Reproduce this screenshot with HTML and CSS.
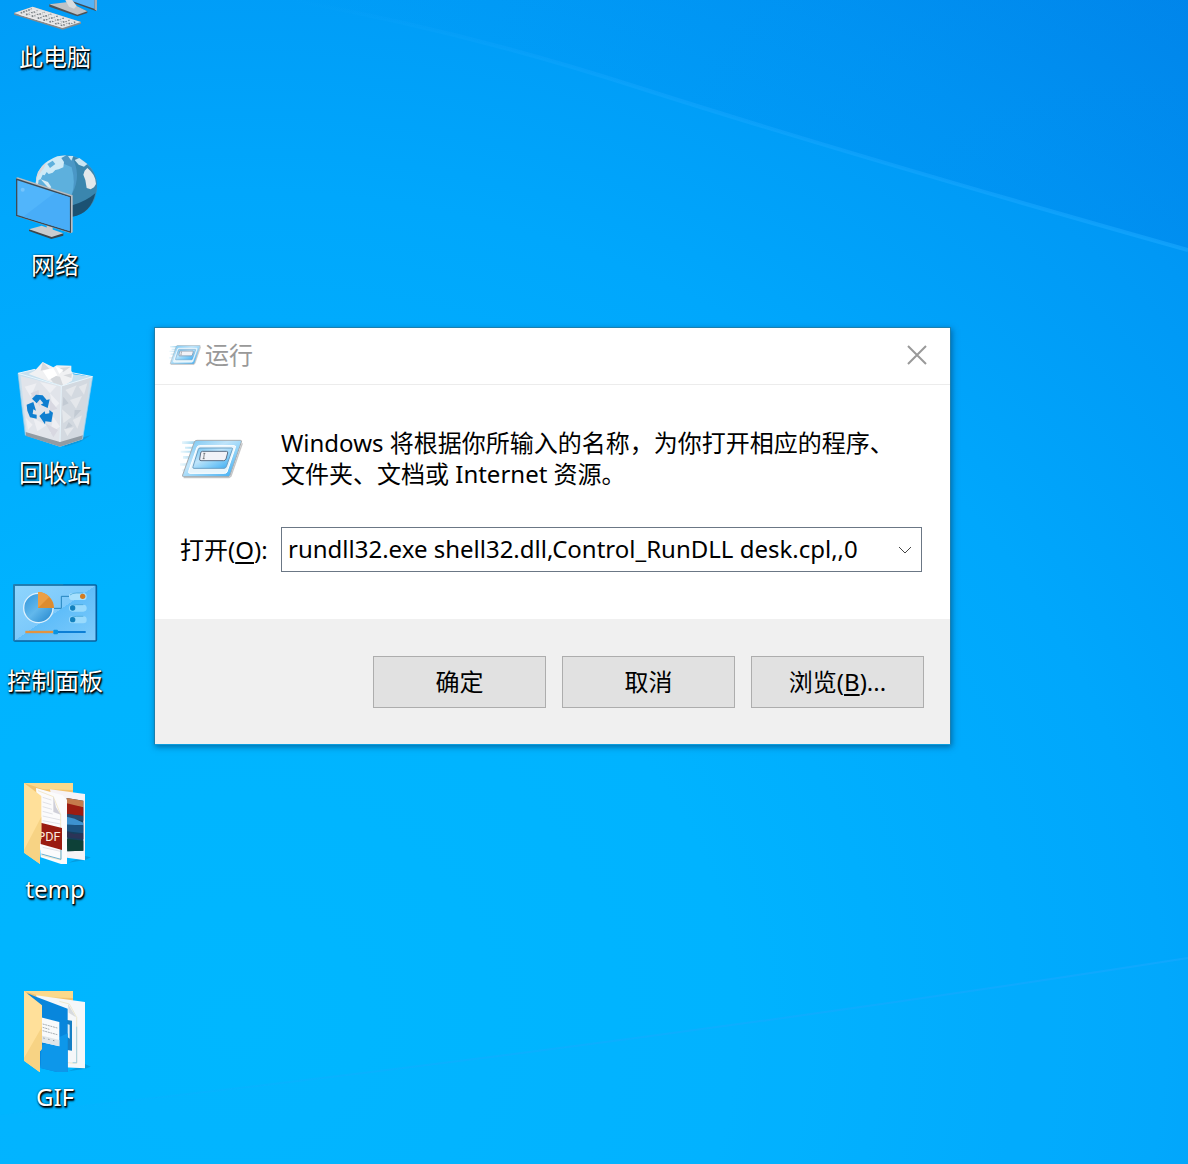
FILE: index.html
```
<!DOCTYPE html>
<html lang="zh-CN">

<head>
    <meta charset="utf-8" />
    <title>运行</title>
    <link rel="stylesheet" href="styles.css">
</head>

<body>

<!-- 壁纸 -->
<svg class="wallpaper" viewBox="0 0 1188 1164" preserveAspectRatio="none" aria-hidden="true">
    <defs>
        <linearGradient id="ray" x1="0" y1="0" x2="1" y2="0">
            <stop offset="0" stop-color="#1aa8ff" stop-opacity="0"/>
            <stop offset="0.4" stop-color="#1aa8ff" stop-opacity="0.4"/>
            <stop offset="1" stop-color="#1aa8ff" stop-opacity="0.6"/>
        </linearGradient>
        <linearGradient id="shade" x1="0" y1="0" x2="1" y2="0">
            <stop offset="0" stop-color="#0070e0" stop-opacity="0"/>
            <stop offset="1" stop-color="#0070e0" stop-opacity="0.2"/>
        </linearGradient>
    </defs>
    <path d="M290 0Q460 30 640 88Q850 155 1188 250V0Z" fill="url(#shade)"/>
    <path d="M290 0Q460 30 640 88Q850 155 1188 250" fill="none" stroke="url(#ray)" stroke-width="4"/>
    <path d="M0 1115Q600 1050 1188 958V1164H0Z" fill="#0cb4ff" fill-opacity="0.14"/>
    <path d="M0 1115Q600 1050 1188 958" fill="none" stroke="url(#ray)" stroke-width="2"/>
</svg>

<!-- 桌面图标 -->
<ul class="icons">
    <li>
        <a href="#">
            <svg viewBox="0 -192 330 288">
                <path d="M50 -150L286 -100V30L190 -4L50 -50Z" fill="#53b4fa" stroke="#444b52" stroke-width="4"/>
                <path d="M284 -100L291 -97V32L284 29Z" fill="#a9adb1"/>
                <path d="M148 13L205 8L262 34V39L232 49L148 20Z" fill="#4d5357"/>
                <path d="M148 13L205 6L262 34L232 44Z" fill="#bfc3c6"/>
                <path d="M190 -10L215 -2L230 18L222 26L207 20Z" fill="#d9dcde"/>
                <path d="M42 39L98 20L243 66V71L188 89L42 44Z" fill="#85898c"/>
                <path d="M42 39L98 20L243 66L188 84Z" fill="#e3e4e5"/>
                <path d="M62 39L96 27M78 44L116 32M95 49L135 38M113 55L154 43M130 61L173 49M148 66L192 55M165 72L211 61M182 77L228 66" stroke="#7c8286" stroke-width="5" stroke-dasharray="5 3"/>
                <path d="M58 43L186 81M76 36L206 75M93 29L222 69" stroke="#eeeeee" stroke-width="3"/>
            </svg>
            <span>此电脑</span>
        </a>
    </li>
    <li>
        <a href="#">
            <svg viewBox="0 12 330 288">
                <circle cx="199" cy="138" r="92" fill="#4a97c6"/>
                <path d="M215 48Q290 75 291 138Q288 215 217 230V160Q246 105 215 48Z" fill="#3a86ae"/>
                <path d="M286 160Q272 222 217 230V196Q258 184 286 160Z" fill="#1b5273"/>
                <path d="M112 130Q118 82 166 60L215 82Q228 130 215 165L150 145Z" fill="#5db0dd"/>
                <path d="M107 132Q110 72 172 49L199 46L184 54L192 66L190 82L176 88L166 90L158 98L146 102L140 96L134 106L128 104L122 118L116 120L114 134Z" fill="#cdeaf7"/>
                <path d="M107 132Q106 90 140 65L132 84L114 108Z" fill="#d9d9dd"/>
                <path d="M142 72L158 62L166 72L150 84Z" fill="#5db0dd"/>
                <path d="M204 48L220 48L214 62ZM224 60L238 54L262 72L252 80L236 74Z" fill="#c9e6f3"/>
                <path d="M262 84Q288 104 288 132L282 142L272 148L260 144L256 120L250 104L254 92Z" fill="#e2e8eb"/>
                <path d="M122 118L144 126L154 142L148 146Z" fill="#d7edf6"/>
                <path d="M140 250L158 256V273L140 268Z" fill="#c7cacc"/>
                <path d="M87 268V273L154 297L190 287V280Z" fill="#3c474e"/>
                <path d="M87 268L125 257L190 280L155 291Z" fill="#c9cccf"/>
                <path d="M48 114L53 112L218 166V277L212 280L48 228Z" fill="#b9bdc1"/>
                <path d="M48 115L213 169V279L48 228Z" fill="#3c4b57"/>
                <path d="M52 121L209 172V273L52 225Z" fill="#51b5fb"/>
                <path d="M164 158L209 172V273L70 230Z" fill="#48adf8"/>
                <circle cx="68" cy="149" r="6" fill="#74c4fc"/>
            </svg>
            <span>网络</span>
        </a>
    </li>
    <li>
        <a href="#">
            <svg viewBox="0 6 330 288">
                <path d="M180 285L250 262L272 256L240 276L196 290Z" fill="#1684bd" fill-opacity="0.5"/>
                <path d="M54 70L105 58L278 80L248 268L180 290L76 256Z" fill="#c6dfee"/>
                <path d="M62 78L184 108L180 282L80 248Z" fill="#e1e4ea"/>
                <path d="M184 108L270 84L246 262L180 282Z" fill="#d3d9e0"/>
                <path d="M86 72L104 62L128 36L160 52L170 46L214 47V62L220 74L216 92L190 108L140 92Z" fill="#f0f1f3"/>
                <path d="M128 36L148 56L122 62ZM176 54L212 50L190 66ZM140 72L180 80L190 108L160 98ZM190 76L216 70L214 84Z" fill="#d5d8dc"/>
                <path d="M128 62L160 54L172 76L146 90ZM166 48L190 60L178 72Z" fill="#ffffff"/>
                <path d="M74 110L110 100L92 140ZM120 96L170 108L150 130ZM100 205L140 226L112 244ZM150 130L178 160L160 180ZM160 200L180 230L150 250ZM78 204L98 224L84 240Z" fill="#eeeff3"/>
                <path d="M92 130L116 120L120 170ZM136 220L174 240L160 262ZM150 150L172 176L150 184Z" fill="#d8d8e1"/>
                <path d="M196 120L230 106L214 140ZM210 150L246 138L228 176ZM186 178L214 202L190 220ZM218 210L246 196L232 236ZM192 238L222 232L202 258ZM236 110L262 100L252 134Z" fill="#e4e7eb"/>
                <path d="M190 140L206 160L188 168ZM224 180L244 180L222 204ZM206 216L218 228L196 236Z" fill="#c2cad3"/>
                <path d="M77 246L180 276L249 256L247 268L180 290L78 258Z" fill="#929ba3"/>
                <path d="M54 70L184 108L278 80M184 108L180 276M54 70L105 58M215 68L278 80" fill="none" stroke="#e8f5fc" stroke-width="3"/>
                <path d="M54 70L76 256M278 80L248 266" fill="none" stroke="#9ec9e2" stroke-width="2"/>
                <g fill="#0f7fd0">
                    <path d="M96 146L108 134L128 136L140 150L149 148L143 174L122 164L130 160L120 148L110 160Z"/>
                    <path d="M80 164L100 156L108 182L100 178L98 192L110 194L110 206L90 202L82 182Z"/>
                    <path d="M118 198L134 184L136 192L148 190L148 180L159 188L154 216L136 214L135 223Z"/>
                </g>
            </svg>
            <span>回收站</span>
        </a>
    </li>
    <li>
        <a href="#">
            <svg viewBox="0 -30 330 288">
                <defs>
                    <linearGradient id="panel" x1="0" y1="0" x2="1" y2="1">
                        <stop offset="0" stop-color="#8fd5fd"/>
                        <stop offset="0.5" stop-color="#7cc9fb"/>
                        <stop offset="0.5" stop-color="#5fbdf9"/>
                        <stop offset="1" stop-color="#80ccfb"/>
                    </linearGradient>
                    <linearGradient id="pie" x1="0" y1="0" x2="1" y2="1">
                        <stop offset="0" stop-color="#2f94da"/>
                        <stop offset="0.5" stop-color="#62b8ec"/>
                        <stop offset="1" stop-color="#1f83cb"/>
                    </linearGradient>
                </defs>
                <rect x="42" y="45" width="247" height="168" rx="3" fill="url(#panel)" stroke="#07619f" stroke-width="5"/>
                <path d="M42 213V45H190" fill="none" stroke="#277fae" stroke-width="5"/>
                <circle cx="115" cy="114" r="44" fill="url(#pie)" stroke="#dcf0fc" stroke-width="4"/>
                <path d="M114 66V114H162A48 48 0 0 0 114 66Z" fill="#dd8c30"/>
                <path d="M114 66V114L148 80A48 48 0 0 0 114 66Z" fill="#eb9f45"/>
                <path d="M162 115H184V79H208" fill="none" stroke="#2384bd" stroke-width="3"/>
                <rect x="207" y="69" width="53" height="21" rx="10" fill="#a7e0fd"/>
                <rect x="207" y="104" width="53" height="21" rx="10" fill="#98dafd"/>
                <rect x="207" y="139" width="53" height="21" rx="10" fill="#98dafd"/>
                <path d="M210 75Q217 69 230 69H250M210 110Q217 104 230 104H250M210 145Q217 139 230 139H250" fill="none" stroke="#399ed3" stroke-width="2"/>
                <circle cx="248" cy="79" r="8" fill="#d37c20"/>
                <circle cx="218" cy="114" r="8" fill="#1281be"/>
                <circle cx="218" cy="149" r="8" fill="#1281be"/>
                <path d="M76 186H160" stroke="#e39440" stroke-width="7"/>
                <path d="M174 186H257" stroke="#0c7fd5" stroke-width="6"/>
                <rect x="160" y="179" width="14" height="14" rx="3" fill="#0994e2"/>
            </svg>
            <span>控制面板</span>
        </a>
    </li>
    <li>
        <a href="#">
            <svg viewBox="0 -6 330 288">
                <path d="M205 278L255 270L272 262L255 258Z" fill="#0a84c0" fill-opacity="0.5"/>
                <path d="M72 39H219V240H72Z" fill="#f2c26e"/>
                <path d="M72 39H219V60L130 58Z" fill="#fbd98b"/>
                <path d="M150 58L255 72V271L190 262Z" fill="#f6f3f6"/>
                <path d="M200 84L250 92V242L202 244Z" fill="#173f5c"/>
                <path d="M200 84L250 92V112L200 106Z" fill="#c57a4c"/>
                <path d="M200 100L250 112V138L200 132Z" fill="#9c1c12"/>
                <path d="M200 132L250 138V152L200 144Z" fill="#274a70"/>
                <path d="M200 140L224 146L250 158V166L200 164Z" fill="#3d92cf"/>
                <path d="M200 164L250 166V190L200 184Z" fill="#1b527f"/>
                <path d="M200 184L222 192L250 190V208L200 202Z" fill="#2b3457"/>
                <path d="M200 206L250 212V242L202 244Z" fill="#0e4138"/>
                <path d="M108 54L188 76L201 90V288L122 262Z" fill="#fbfbfc"/>
                <path d="M114 62L160 80L182 134V270L124 256" fill="none" stroke="#eedfb4" stroke-width="2"/>
                <path d="M160 78L168 112L182 134L160 126Z" fill="#cfcfd8"/>
                <path d="M128 82L154 90M128 96L154 104M128 110L156 118M128 124L158 132M128 138L182 150M128 152L182 162M128 232L182 244" stroke="#d3d4dc" stroke-width="2"/>
                <path d="M124 252L183 268V236" fill="none" stroke="#6aafd1" stroke-width="3"/>
                <path d="M122 158L186 174V240L122 222Z" fill="#9a1b10"/>
                <text x="112" y="213" class="pdf">PDF</text>
                <path d="M72 39L124 78V206L120 214V282L72 248Z" fill="#ffe09a"/>
                <path d="M124 140V206L120 214V282L72 248V240Z" fill="#f7d384"/>
            </svg>
            <span>temp</span>
        </a>
    </li>
    <li>
        <a href="#">
            <svg viewBox="0 -12 330 288">
                <path d="M205 274L255 266L272 260L255 252Z" fill="#0a84c0" fill-opacity="0.5"/>
                <path d="M72 33H219V240H72Z" fill="#f2c26e"/>
                <path d="M72 33H219V54L130 52Z" fill="#fbd98b"/>
                <path d="M108 46L255 66V265L190 262Z" fill="#f5f7f9"/>
                <path d="M178 64L208 72L230 112V250L202 248" fill="none" stroke="#e8dfb8" stroke-width="2"/>
                <path d="M204 72L206 98L228 112Z" fill="#d7dade"/>
                <path d="M201 120L216 122V212L201 210Z" fill="#157fc5"/>
                <path d="M201 132L209 134V176L201 170Z" fill="#d8ecf8"/>
                <path d="M230 140V248H218" fill="none" stroke="#7dc2e4" stroke-width="2"/>
                <path d="M82 40L108 50L203 86V284L122 264Z" fill="#0886dc"/>
                <path d="M124 196L203 160V284L122 264Z" fill="#0d97ea"/>
                <path d="M122 112L178 126V199L122 186Z" fill="#f8fafb"/>
                <path d="M122 166L178 180V199L122 186Z" fill="#dfe5e9"/>
                <path d="M128 132L172 144M128 142L148 148M128 152L172 164" stroke="#7d868c" stroke-width="2" stroke-dasharray="6 2"/>
                <path d="M130 174L170 184" stroke="#8e979d" stroke-width="3" stroke-dasharray="4 11"/>
                <path d="M72 33L126 76V206L120 214V277L72 242Z" fill="#ffe09a"/>
                <path d="M126 140V206L120 214V277L72 242V234Z" fill="#f7d384"/>
            </svg>
            <span>GIF</span>
        </a>
    </li>
</ul>

<!-- 运行窗口 -->
<form class="run" role="dialog" aria-labelledby="run-title">
    <div class="title">
        <svg class="logo-sm" viewBox="93 354 189 126"><use href="#run-logo"/></svg>
        <h1 id="run-title">运行</h1>
        <button type="button" class="close" aria-label="关闭">
            <svg viewBox="0 0 20 20"><path d="M1 1L19 19M19 1L1 19" stroke="#999999" stroke-width="2"/></svg>
        </button>
    </div>
    <div class="main">
        <div class="info">
            <svg class="logo" viewBox="93 354 189 126">
                <defs>
                    <linearGradient id="glass" x1="0" y1="0" x2="1" y2="1">
                        <stop offset="0" stop-color="#6fc3f2"/>
                        <stop offset="0.4" stop-color="#bfe4fa"/>
                        <stop offset="0.6" stop-color="#8fd2f8"/>
                        <stop offset="1" stop-color="#35a8f2"/>
                    </linearGradient>
                    <linearGradient id="trail" x1="0" y1="0" x2="1" y2="0">
                        <stop offset="0" stop-color="#a9dcf3" stop-opacity="0.2"/>
                        <stop offset="1" stop-color="#8dcdec"/>
                    </linearGradient>
                </defs>
                <g id="run-logo">
                    <path d="M99 364H144V372H99ZM108 380H138V386H108ZM95 392H132V398H95ZM102 408H126V416H102ZM93 430H118V437H93ZM100 448H112V454H100Z" fill="url(#trail)"/>
                    <path d="M104 473H240L246 468L280 370" fill="none" stroke="#8b8d90" stroke-opacity="0.5" stroke-width="4"/>
                    <path d="M144 361H274Q279 361 277 366L243 466Q241 470 237 470H104Q99 470 101 465L136 366Q138 361 144 361Z" fill="url(#glass)" stroke="#a5aaae" stroke-width="3"/>
                    <path d="M151 377H256Q261 377 259 382L234 456Q232 460 227 460H123Q117 460 119 454L144 382Q146 377 151 377Z" fill="#e7f5fc" stroke="#ffffff" stroke-width="3"/>
                    <path d="M153 384H248Q252 384 250 388L232 440Q230 445 225 445H135Q130 445 132 440L148 388Q149 384 153 384Z" fill="url(#glass)" stroke="#6c9fc3" stroke-width="3"/>
                    <path d="M160 394H232Q237 394 236 399L231 417Q229 422 224 422H156Q151 422 152 417L155 399Q156 394 160 394Z" fill="#f1f2f7" stroke="#5b6f86" stroke-width="3"/>
                    <path d="M163 400H169M166 400L164 416M161 416H167" fill="none" stroke="#4a4d52" stroke-width="2"/>
                </g>
            </svg>
            <p>Windows 将根据你所输入的名称，为你打开相应的程序、文件夹、文档或 Internet 资源。</p>
        </div>
        <div class="open">
            <label for="cmd">打开(<u>O</u>):</label>
            <div class="combo">
                <input type="text" id="cmd" value="rundll32.exe shell32.dll,Control_RunDLL desk.cpl,,0" spellcheck="false">
                <button type="button" aria-label="历史记录">
                    <svg viewBox="0 0 14 8"><path d="M1 1L7 7L13 1" fill="none" stroke="#444444"/></svg>
                </button>
            </div>
        </div>
    </div>
    <div class="btns">
        <button type="button">确定</button>
        <button type="button">取消</button>
        <button type="button">浏览(<u>B</u>)...</button>
    </div>
</form>

</body>

</html>
```

FILE: styles.css
```
* {
    padding: 0;
    margin: 0;
    list-style: none;
    box-sizing: border-box;
}

html,
body {
    height: 100%;
}

body {
    position: relative;
    overflow: hidden;
    font-family: "Noto Sans", "Noto Sans CJK SC", sans-serif;
    font-size: 24px;
    line-height: 32px;
    color: #000;
    background: radial-gradient(ellipse 120% 110% at 20% 88%, #00b7ff 0%, #00b3ff 35%, #00a7fc 65%, #0098f5 88%, #0082e8 115%);
}

svg {
    display: block;
}

button,
input {
    font: inherit;
    color: inherit;
}

.wallpaper {
    position: absolute;
    left: 0;
    top: 0;
    width: 100%;
    height: 100%;
}

/* 桌面图标 */
.icons {
    position: relative;
    display: flex;
    flex-direction: column;
    gap: 71px;
    width: 110px;
    margin-top: -64px;
}

.icons a {
    display: flex;
    flex-direction: column;
    gap: 9px;
    color: #fff;
    text-align: center;
    text-decoration: none;
    white-space: nowrap;
    text-shadow: 1px 1px 1px #000, 1px 2px 2px #000, 0 0 2px rgba(0, 0, 0, 0.6);
}

.icons svg {
    width: 110px;
    height: 96px;
}

.pdf {
    font-family: Roboto, sans-serif;
    font-size: 38px;
    fill: #fbe9df;
    text-shadow: none;
}

/* 运行窗口 */
.run {
    position: absolute;
    left: 154px;
    top: 327px;
    width: 797px;
    background: #fff;
    border: 1px solid #1c7fae;
    border-bottom-color: #0a9ddd;
    box-shadow: 1px 2px 6px rgba(0, 40, 80, 0.5);
}

.title {
    display: flex;
    align-items: center;
    height: 57px;
    padding: 0 23px 2px 14px;
    border-bottom: 1px solid #ececec;
}

.title h1 {
    margin-left: 4px;
    font-size: 24px;
    font-weight: normal;
    color: #999;
}

.logo-sm {
    width: 32px;
    height: 22px;
}

.close {
    margin-left: auto;
    border: 0;
    background: none;
}

.close svg {
    width: 20px;
    height: 20px;
}

.main {
    padding: 42px 28px 47px 25px;
}

.info {
    display: grid;
    grid-template-columns: 101px 1fr;
}

.info p {
    padding-right: 24px;
    line-height: 31px;
}

.logo {
    width: 63px;
    height: 42px;
    margin-top: 11px;
}

.open {
    display: grid;
    grid-template-columns: 101px 1fr;
    align-items: center;
    margin-top: 38px;
}

.combo {
    display: flex;
    height: 45px;
    border: 1px solid #6b7785;
}

.combo input {
    flex: 1;
    min-width: 0;
    padding: 0 0 2px 6px;
    border: 0;
    outline: 0;
    background: none;
}

.combo button {
    width: 31px;
    padding-left: 8px;
    border: 0;
    background: none;
}

.combo svg {
    width: 14px;
    height: 8px;
}

u {
    text-underline-offset: 3px;
}

.btns {
    display: flex;
    justify-content: flex-end;
    gap: 16px;
    padding: 37px 26px 36px;
    background: #f0f0f0;
}

.btns button {
    width: 173px;
    height: 52px;
    border: 1px solid #adadad;
    background: #e1e1e1;
}
```
